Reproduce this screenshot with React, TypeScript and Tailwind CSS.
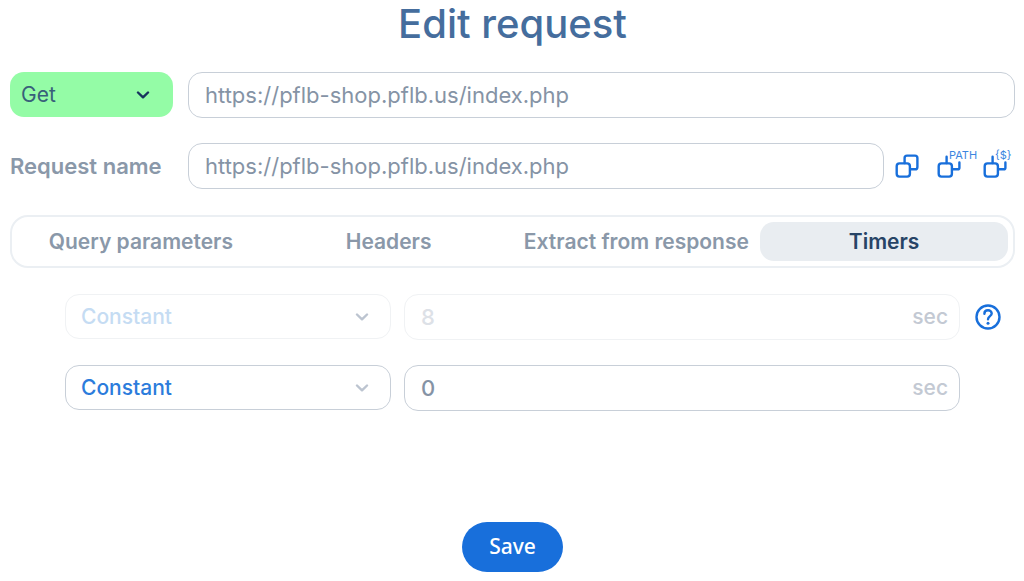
import { useState } from "react";
import type { ReactNode } from "react";

const fieldClass =
  "h-[46px] w-full min-w-0 rounded-[14px] border border-[#c8cfd8] bg-white px-4 text-[22px] text-[#8593a5] outline-none";

function Chevron({ className }: { className: string }) {
  return (
    <svg
      viewBox="0 0 14 8"
      className={className}
      fill="none"
      stroke="currentColor"
      strokeLinecap="round"
      strokeLinejoin="round"
      aria-hidden="true"
    >
      <path d="M2 1.5 7 6.3 12 1.5" strokeWidth="2.4" />
    </svg>
  );
}

function CopyIcon({ cut = false }: { cut?: boolean }) {
  return (
    <svg
      viewBox="0 0 24 24"
      className="size-6"
      fill="none"
      stroke="currentColor"
      strokeWidth="2.4"
      strokeLinecap="round"
      strokeLinejoin="round"
      aria-hidden="true"
    >
      <rect x="1.7" y="9.4" width="13.2" height="13.2" rx="2.8" />
      {cut ? (
        <path d="M9.6 9V2.8M22.4 8.5v5.2a1.6 1.6 0 0 1-1.6 1.6H15.5" />
      ) : (
        <path d="M9.6 9V4a2.4 2.4 0 0 1 2.4-2.4h8A2.4 2.4 0 0 1 22.4 4v8.9a2.4 2.4 0 0 1-2.4 2.4H15.5" />
      )}
    </svg>
  );
}

function CopyButton({ label, tag }: { label: string; tag?: ReactNode }) {
  return (
    <button type="button" aria-label={label} className="relative block size-6 text-[#186fdb]">
      <CopyIcon cut={Boolean(tag)} />
      {tag && <span className="absolute -top-[7px] left-3 text-[11px] leading-4 text-[#3b85df]">{tag}</span>}
    </button>
  );
}

function TimerRow({ name, value, disabled = false }: { name: string; value: string; disabled?: boolean }) {
  return (
    <div className="flex items-start gap-[13px]">
      <div className="relative w-[326px] shrink-0">
        <select
          aria-label={`${name} type`}
          disabled={disabled}
          className="h-[45px] w-full appearance-none rounded-[14px] border border-[#c8cfd8] bg-white px-[15px] text-[21px] font-medium text-[#2b7cdc] outline-none disabled:border-[#f0f2f4] disabled:text-[#c5dcf3] disabled:opacity-100"
        >
          <option>Constant</option>
          <option>Random</option>
        </select>
        <Chevron className="pointer-events-none absolute top-[19px] right-[22px] h-2 w-3.5 text-[#bcc4d0]" />
      </div>
      <div className="relative min-w-0 flex-1">
        <input
          aria-label={`${name} seconds`}
          disabled={disabled}
          defaultValue={value}
          className={`${fieldClass} pr-16 font-medium disabled:border-[#f0f2f4] disabled:text-[#dde1e7]`}
        />
        <span className="pointer-events-none absolute inset-y-0 right-3 flex items-center text-[21px] font-medium text-[#c3c9d3]">
          sec
        </span>
      </div>
      <div className="flex h-[45px] w-[42px] items-center pl-0.5">
        {disabled && (
          <button type="button" aria-label="Help" className="text-[#186fdb]">
            <svg
              viewBox="0 0 26 26"
              className="size-[26px]"
              fill="none"
              stroke="currentColor"
              strokeWidth="2.4"
              strokeLinecap="round"
              aria-hidden="true"
            >
              <circle cx="13" cy="13" r="11.5" />
              <path d="M9.4 9.7C9.4 7.6 11 6.3 13 6.3s3.7 1.3 3.7 3.3c0 2.4-3.7 2.7-3.7 5.6" />
              <circle cx="13" cy="19.3" r="1.5" fill="currentColor" stroke="none" />
            </svg>
          </button>
        )}
      </div>
    </div>
  );
}

const tabs = ["Query parameters", "Headers", "Extract from response", "Timers"];

export default function App() {
  const [active, setActive] = useState("Timers");

  return (
    <main className="bg-white pr-[9px] pb-2 pl-2.5 font-['Inter',sans-serif]">
      <h1 className="pb-6 text-center text-[40px] leading-[48px] font-medium text-[#456d9d]">Edit request</h1>

      <form onSubmit={(event) => event.preventDefault()}>
        <div className="flex items-start gap-[15px]">
          <div className="relative w-[163px] shrink-0">
            <select
              aria-label="Method"
              className="h-[45px] w-full appearance-none rounded-[14px] bg-[#94fca6] px-[11px] text-[21px] text-[#38607a] outline-none"
            >
              <option>Get</option>
              <option>Post</option>
            </select>
            <Chevron className="pointer-events-none absolute top-[19px] right-[23px] h-2 w-3.5 text-[#17345d]" />
          </div>
          <input aria-label="URL" defaultValue="https://pflb-shop.pflb.us/index.php" className={fieldClass} />
        </div>

        <div className="mt-[25px] flex items-center gap-[15px]">
          <label htmlFor="request-name" className="w-[163px] shrink-0 text-[22px] font-semibold text-[#8a98a9]">
            Request name
          </label>
          <div className="flex min-w-0 flex-1 items-center gap-[11px]">
            <input id="request-name" defaultValue="https://pflb-shop.pflb.us/index.php" className={fieldClass} />
            <div className="flex w-[120px] shrink-0 items-center gap-[18px]">
              <CopyButton label="Copy" />
              <CopyButton label="Copy path" tag="PATH" />
              <div className="pl-1">
                <CopyButton label="Copy variable" tag="{$}" />
              </div>
            </div>
          </div>
        </div>

        <div
          role="tablist"
          className="mt-[26px] grid h-[53px] grid-cols-4 rounded-[18px] border-2 border-[#ebeff3] p-[5px]"
        >
          {tabs.map((tab) => (
            <button
              key={tab}
              type="button"
              role="tab"
              aria-selected={active === tab}
              onClick={() => setActive(tab)}
              className="rounded-[14px] text-[21px] font-semibold whitespace-nowrap text-[#8a98a9] aria-selected:bg-[#e9edf1] aria-selected:text-[#274466]"
            >
              {tab}
            </button>
          ))}
        </div>

        <div className="mt-[26px] flex flex-col gap-[25px] pl-[55px]">
          <TimerRow name="Delay before request" value="8" disabled />
          <TimerRow name="Delay after request" value="0" />
        </div>

        <div className="mt-[111px] flex justify-center">
          <button
            type="submit"
            className="h-[50px] rounded-full bg-[#186fdb] px-[27px] font-['Noto_Sans',sans-serif] text-[21px] font-medium text-white"
          >
            Save
          </button>
        </div>
      </form>
    </main>
  );
}
